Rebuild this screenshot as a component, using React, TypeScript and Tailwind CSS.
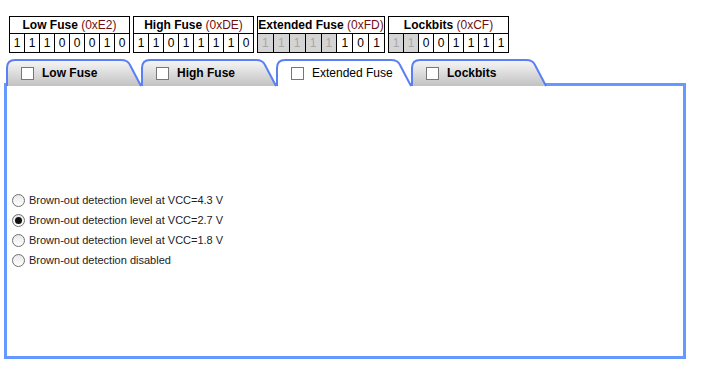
import React from "react";

type Bit = { v: string; dis?: boolean };

function FuseTable({ name, hex, bits, w }: { name: string; hex: string; bits: Bit[]; w: string }) {
  return (
    <div className={`border border-black bg-white ${w}`}>
      <div className="h-[17px] border-b border-black text-center text-[12px] leading-[17px] text-black">
        <span className="font-bold">{name}</span> <span className="text-[#701010]">({hex})</span>
      </div>
      <div className="flex h-[18px]">
        {bits.map((b, i) => (
          <div
            key={i}
            className={`flex-1 text-center text-[12px] leading-[18px] ${i > 0 ? "border-l border-black" : ""} ${
              b.dis ? "bg-[#d4d4d4] text-[#a8a8a8]" : "text-black"
            }`}
          >
            {b.v}
          </div>
        ))}
      </div>
    </div>
  );
}

function mk(s: string, dis = 0): Bit[] {
  return s.split("").map((c, i) => ({ v: c, dis: i < dis }));
}

function Tab({ label, active }: { label: string; active?: boolean }) {
  const W = 136;
  const H = 27;
  const d = `M1,${H} L1,9 Q1,1 9,1 L${W - 21},1 Q${W - 14},1 ${W - 12},6 L${W - 1},${H}`;
  return (
    <div className={`relative h-[27px] w-[135px] shrink-0 ${active ? "z-20" : "z-0"}`}>
      <svg className="absolute left-0 top-0 overflow-visible" width={W} height={H} viewBox={`0 0 ${W} ${H}`}>
        <defs>
          <linearGradient id="tabg" x1="0" y1="0" x2="0" y2="1">
            <stop offset="0" stopColor="#f7f7f7" />
            <stop offset="1" stopColor="#c2c2c2" />
          </linearGradient>
        </defs>
        <path d={d + " Z"} fill={active ? "#ffffff" : "url(#tabg)"} stroke="none" />
        <path d={d} fill="none" stroke="#5a80f4" strokeWidth="2" />
      </svg>
      <div className="relative flex h-full items-center pl-[15px] pt-[1px]">
        <span className="mr-[8px] h-[13px] w-[13px] border border-[#777] bg-white" />
        <span
          className={`text-[12px] leading-none text-black ${active ? "font-normal" : "font-bold"}`}
        >
          {label}
        </span>
      </div>
    </div>
  );
}

function Radio({ label, checked }: { label: string; checked?: boolean }) {
  return (
    <div className="flex h-[20px] items-center">
      <span className="flex h-[13px] w-[13px] items-center justify-center rounded-full border border-[#6f6f6f] bg-gradient-to-b from-[#e8e8e8] to-white">
        {checked && <span className="h-[7px] w-[7px] rounded-full bg-[#111]" />}
      </span>
      <span className="ml-[4px] text-[11px] leading-none text-[#222]">{label}</span>
    </div>
  );
}

export default function App() {
  return (
    <div
      className="h-[372px] w-[704px] bg-white"
      style={{ fontFamily: '"Liberation Sans", Arial, sans-serif' }}
    >
      <div className="flex gap-[3px] pl-[9px] pt-[16px]">
        <FuseTable name="Low Fuse" hex="0xE2" bits={mk("11100010")} w="w-[121px]" />
        <FuseTable name="High Fuse" hex="0xDE" bits={mk("11011110")} w="w-[121px]" />
        <FuseTable name="Extended Fuse" hex="0xFD" bits={mk("11111101", 5)} w="w-[128px]" />
        <FuseTable name="Lockbits" hex="0xCF" bits={mk("11001111", 2)} w="w-[121px]" />
      </div>
      <div className="ml-[4px] mt-[6px] w-[682px]">
        <div className="relative z-10 flex pl-[2px]">
          <Tab label="Low Fuse" />
          <Tab label="High Fuse" />
          <Tab label="Extended Fuse" active />
          <Tab label="Lockbits" />
        </div>
        <div className="relative z-0 mt-[-3px] h-[276px] border-[3px] border-[#6699ff] bg-white pl-[5px] pt-[104px]">
          <Radio label="Brown-out detection level at VCC=4.3 V" />
          <Radio label="Brown-out detection level at VCC=2.7 V" checked />
          <Radio label="Brown-out detection level at VCC=1.8 V" />
          <Radio label="Brown-out detection disabled" />
        </div>
      </div>
    </div>
  );
}
